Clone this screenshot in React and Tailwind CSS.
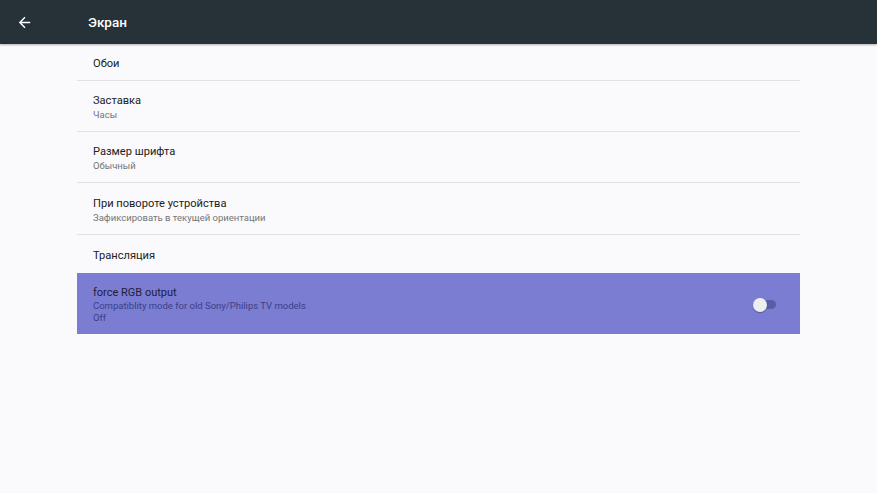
import React from 'react';

const rows = [
  { title: 'Обои', h: 'h-[37px]' },
  { title: 'Заставка', sub: 'Часы', h: 'h-[51px]' },
  { title: 'Размер шрифта', sub: 'Обычный', h: 'h-[51px]' },
  { title: 'При повороте устройства', sub: 'Зафиксировать в текущей ориентации', h: 'h-[52px]' },
  { title: 'Трансляция', h: 'h-[38px]', last: true },
];

export default function App() {
  return (
    <div className="w-[877px] h-[493px] bg-[#faf9fc] overflow-hidden" style={{ fontFamily: 'Roboto, "Noto Sans", sans-serif' }}>
      <header className="h-[44px] bg-[#263238] flex items-center shadow-[0_1px_2px_rgba(0,0,0,0.3)] relative">
        <svg className="ml-[16px] w-[17px] h-[17px]" viewBox="0 0 24 24" fill="#fff">
          <path d="M20 11H7.83l5.59-5.59L12 4l-8 8 8 8 1.41-1.41L7.83 13H20v-2z" />
        </svg>
        <span className="ml-[55px] text-white text-[13.5px] font-medium">Экран</span>
      </header>
      <div className="ml-[77px] w-[723px]">
        {rows.map((r) => (
          <div key={r.title} className={`${r.h} flex flex-col justify-center pl-[16px] pt-[2px] ${r.last ? '' : 'border-b border-[#e2e1e5]'}`}>
            <div className="text-[11.1px] leading-[15px] text-[#212121]">{r.title}</div>
            {r.sub && <div className="text-[9.5px] leading-[13px] text-[#757575]">{r.sub}</div>}
          </div>
        ))}
        <div className="h-[61px] bg-[#7b7dd3] flex items-center pl-[16px] pr-[23px] pt-[2px]">
          <div className="flex-1 flex flex-col">
            <div className="text-[11px] leading-[15px] text-[#1e1e3a]">force RGB output</div>
            <div className="text-[9.5px] leading-[12px] text-[#3c3e86]">Compatiblity mode for old Sony/Philips TV models</div>
            <div className="text-[9.5px] leading-[12px] text-[#3c3e86]">Off</div>
          </div>
          <div className="relative w-[24px] h-[14px] flex items-center">
            <div className="absolute left-[6px] w-[17px] h-[9px] rounded-full bg-[#5a5ca8]" />
            <div className="absolute left-0 w-[14px] h-[14px] rounded-full bg-[#eceef0] shadow-[0_1px_1px_rgba(0,0,0,0.3)]" />
          </div>
        </div>
      </div>
    </div>
  );
}
